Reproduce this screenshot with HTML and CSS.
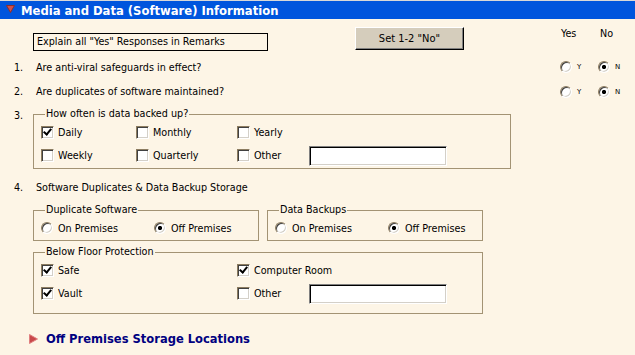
FILE: index.html
```html
<!DOCTYPE html>
<html lang="en">
<head>
    <meta charset="UTF-8">
    <title>Media and Data (Software) Information</title>
    <link rel="stylesheet" href="styles.css">
</head>
<body>
    <div class="titlebar">
        <svg class="tri" width="9" height="8" viewBox="0 0 9 8"><polygon points="0.5,0.5 8.5,0.5 4.5,7.5" fill="#d0504c" stroke="#8a2e2c" stroke-width="1"/></svg>
        Media and Data (Software) Information
    </div>

    <div class="form">
        <div class="row top-row">
            <span></span>
            <div class="top-actions">
                <div class="note">Explain all "Yes" Responses in Remarks</div>
                <button class="btn">Set 1-2 "No"</button>
            </div>
            <span class="yn-head yes">Yes</span>
            <span class="yn-head no">No</span>
        </div>

        <div class="row q">
            <span class="num">1.</span>
            <span class="qtext">Are anti-viral safeguards in effect?</span>
            <label class="yn"><input type="radio" name="q1">Y</label>
            <label class="yn"><input type="radio" name="q1" checked>N</label>
        </div>

        <div class="row q">
            <span class="num">2.</span>
            <span class="qtext">Are duplicates of software maintained?</span>
            <label class="yn"><input type="radio" name="q2">Y</label>
            <label class="yn"><input type="radio" name="q2" checked>N</label>
        </div>

        <div class="row q3">
            <span class="num">3.</span>
            <fieldset class="box freq">
                <legend>How often is data backed up?</legend>
                <div class="opts">
                    <label class="chk"><input type="checkbox" checked>Daily</label>
                    <label class="chk"><input type="checkbox">Monthly</label>
                    <label class="chk"><input type="checkbox">Yearly</label>
                    <span></span>
                    <label class="chk"><input type="checkbox">Weekly</label>
                    <label class="chk"><input type="checkbox">Quarterly</label>
                    <label class="chk"><input type="checkbox">Other</label>
                    <input type="text" class="txt">
                </div>
            </fieldset>
        </div>

        <div class="row q q4">
            <span class="num">4.</span>
            <span class="qtext">Software Duplicates &amp; Data Backup Storage</span>
        </div>

        <div class="storage">
            <div class="storage-top">
                <fieldset class="box dup">
                    <legend>Duplicate Software</legend>
                    <div class="radios">
                        <label class="rad"><input type="radio" name="dup">On Premises</label>
                        <label class="rad"><input type="radio" name="dup" checked>Off Premises</label>
                    </div>
                </fieldset>
                <fieldset class="box backups">
                    <legend>Data Backups</legend>
                    <div class="radios">
                        <label class="rad"><input type="radio" name="bak">On Premises</label>
                        <label class="rad"><input type="radio" name="bak" checked>Off Premises</label>
                    </div>
                </fieldset>
            </div>

            <fieldset class="box floor">
                <legend>Below Floor Protection</legend>
                <div class="opts">
                    <label class="chk wide"><input type="checkbox" checked>Safe</label>
                    <label class="chk"><input type="checkbox" checked>Computer Room</label>
                    <span></span>
                    <label class="chk wide"><input type="checkbox" checked>Vault</label>
                    <label class="chk"><input type="checkbox">Other</label>
                    <input type="text" class="txt">
                </div>
            </fieldset>
        </div>

        <div class="link-row">
            <svg class="tri" width="9" height="10" viewBox="0 0 9 10"><polygon points="0.5,0.5 8.5,5 0.5,9.5" fill="#c8484a" stroke="#e08080" stroke-width="1"/></svg>
            <a href="#" class="section-link">Off Premises Storage Locations</a>
        </div>
    </div>
</body>
</html>
```

FILE: styles.css
```css
* {
    box-sizing: border-box;
}

body {
    margin: 0;
    background: #fdf5e6;
    font-family: 'DejaVu Sans Condensed', 'DejaVu Sans', sans-serif;
    font-size: 10.7px;
    color: #000;
}

.titlebar {
    height: 19px;
    border-top: 1px solid #d8d8d8;
    background: #0055dd;
    color: #fff;
    font-weight: bold;
    font-size: 12.9px;
    line-height: 17px;
    padding-left: 6px;
    display: flex;
    align-items: center;
    gap: 6px;
}

.titlebar .tri {
    margin-top: -2px;
}

.form {
    padding-left: 14px;
}

.row {
    display: grid;
    grid-template-columns: 19px 1fr 38px 37px;
}

.top-row {
    margin-top: 8px;
    height: 23px;
}

.top-actions {
    display: flex;
    gap: 87px;
}

.note {
    width: 235px;
    height: 18px;
    margin-top: 6px;
    border: 1px solid #000;
    padding-left: 3px;
    line-height: 16px;
}

.btn {
    width: 109px;
    height: 23px;
    background: #d5cdbc;
    border: 1px solid;
    border-color: #fff #000 #000 #fff;
    box-shadow: inset -1px -1px 0 #808080;
    font-family: inherit;
    font-size: 11px;
    padding: 0;
}

.yn-head {
    line-height: 14px;
}

.yes {
    padding-left: 1px;
}

.no {
    padding-left: 2px;
}

.q {
    height: 24px;
    line-height: 24px;
}

.top-row + .q {
    margin-top: 6px;
}

.qtext {
    padding-left: 3px;
}

.yn {
    display: flex;
    align-items: center;
    gap: 5px;
    font-family: 'DejaVu Sans', sans-serif;
    font-size: 7px;
    margin-top: -2px;
}

.q + .q .yn {
    margin-top: -1px;
}

input[type="radio"],
input[type="checkbox"] {
    appearance: none;
    margin: 0;
    flex: none;
    background: #fff;
    border: 1px solid;
    border-color: #8c7c60 #fff #fff #8c7c60;
    box-shadow: inset 1px 1px 0 #404040, inset -1px -1px 0 #d4d0c8;
    position: relative;
}

input[type="radio"] {
    width: 12px;
    height: 12px;
    border-radius: 50%;
}

input[type="radio"]:checked {
    background: radial-gradient(circle, #000 0 1.8px, #fff 2.4px);
}

input[type="checkbox"] {
    width: 13px;
    height: 13px;
}

input[type="checkbox"]:checked::before {
    content: "";
    position: absolute;
    left: 3px;
    top: 0px;
    width: 3px;
    height: 6px;
    border: solid #000;
    border-width: 0 2px 2px 0;
    transform: rotate(40deg);
}

.q3 {
    margin-top: 3px;
}

.q3 .num {
    margin-top: 2px;
    line-height: 14px;
}

.box {
    margin: 0;
    padding: 0 0 1px 7px;
    border: 1px solid #a39374;
    min-width: 0;
}

.box legend {
    margin-left: 4px;
    padding: 0 1px;
    line-height: 14px;
}

.freq {
    width: 478px;
}

.opts {
    display: grid;
    grid-template-columns: 95px 101px 72px 138px;
    grid-auto-rows: 23px;
    align-items: center;
}

.chk,
.rad {
    display: flex;
    align-items: center;
    gap: 4px;
    white-space: nowrap;
}

.rad {
    gap: 5px;
}

.chk.wide {
    grid-column: span 2;
}

.txt {
    width: 138px;
    height: 20px;
    margin: 0;
    background: #fff;
    border: 1px solid;
    border-color: #808080 #fff #fff #808080;
    box-shadow: inset 1px 1px 0 #000, inset -1px -1px 0 #d4d0c8;
}

.q4 {
    margin-top: 7px;
}

.storage {
    padding-left: 19px;
}

.storage-top {
    display: flex;
    gap: 8px;
    margin-top: 3px;
}

.radios {
    display: grid;
    grid-template-columns: 113px auto;
    grid-auto-rows: 22px;
    align-items: center;
}

.dup {
    width: 226px;
}

.backups {
    width: 216px;
}

.floor {
    width: 450px;
    margin-top: 4px;
    padding-bottom: 8px;
}

.link-row {
    display: flex;
    align-items: center;
    gap: 8px;
    margin-top: 17px;
    padding-left: 15px;
    line-height: 16px;
}

.section-link {
    color: #000080;
    font-weight: bold;
    font-size: 12.8px;
    text-decoration: none;
}
```
